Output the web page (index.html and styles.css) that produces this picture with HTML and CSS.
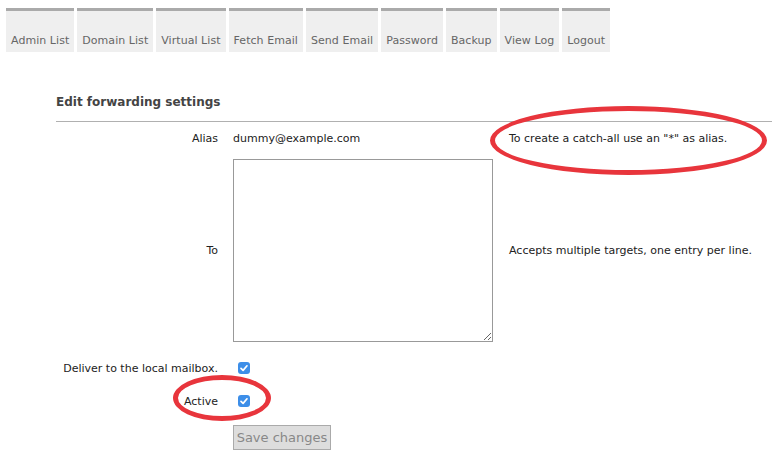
FILE: index.html
```html
<!DOCTYPE html>
<html>
<head>
<meta charset="utf-8">
<link rel="stylesheet" href="styles.css">
</head>
<body>
<nav class="tabs">
  <a class="tab" href="#">Admin List</a>
  <a class="tab" href="#">Domain List</a>
  <a class="tab" href="#">Virtual List</a>
  <a class="tab" href="#">Fetch Email</a>
  <a class="tab" href="#">Send Email</a>
  <a class="tab" href="#">Password</a>
  <a class="tab" href="#">Backup</a>
  <a class="tab" href="#">View Log</a>
  <a class="tab" href="#">Logout</a>
</nav>
<main class="content">
  <h3 class="title">Edit forwarding settings</h3>
  <form class="form">
    <div class="row row-alias">
      <span class="label">Alias</span>
      <span class="value">dummy@example.com</span>
      <span class="hint">To create a catch-all use an "*" as alias.</span>
    </div>
    <div class="row row-to">
      <span class="label">To</span>
      <textarea class="targets"></textarea>
      <span class="hint">Accepts multiple targets, one entry per line.</span>
    </div>
    <div class="row row-check row-deliver">
      <span class="label">Deliver to the local mailbox.</span>
      <span class="value"><span class="check"><svg viewBox="0 0 12 12" width="12" height="12"><path d="M3 6.3 L5.1 8.4 L9 3.8" fill="none" stroke="#fff" stroke-width="1.7" stroke-linecap="round" stroke-linejoin="round"/></svg></span></span>
    </div>
    <div class="row row-check">
      <span class="label">Active</span>
      <span class="value"><span class="check"><svg viewBox="0 0 12 12" width="12" height="12"><path d="M3 6.3 L5.1 8.4 L9 3.8" fill="none" stroke="#fff" stroke-width="1.7" stroke-linecap="round" stroke-linejoin="round"/></svg></span></span>
    </div>
    <div class="row row-submit">
      <span class="label"></span>
      <span class="value"><button type="button" class="save">Save changes</button></span>
    </div>
  </form>
</main>
<div class="mark mark-alias"></div>
<div class="mark mark-active"></div>
</body>
</html>
```
FILE: styles.css
```css
html, body {
  margin: 0;
  padding: 0;
  background: #fff;
}
body {
  position: relative;
  width: 778px;
  height: 467px;
  overflow: hidden;
  font-family: "DejaVu Sans", Verdana, sans-serif;
  font-size: 11px;
  color: #222;
}
.tabs {
  display: flex;
  gap: 3px;
  padding: 8px 0 0 6px;
}
.tab {
  display: block;
  background: #efefef;
  border-top: 3px solid #aaaaaa;
  padding: 23px 5px 4px;
  line-height: 14px;
  color: #666;
  text-decoration: none;
  white-space: nowrap;
  letter-spacing: 0.05px;
}
.content {
  margin: 0 6px 0 56px;
}
.title {
  margin: 0;
  padding-top: 43px;
  font-size: 12px;
  line-height: 14px;
  font-weight: bold;
  color: #444;
  padding-bottom: 12px;
  border-bottom: 1px solid #b0b0b0;
}
.row {
  display: grid;
  grid-template-columns: 162px 260px 1fr;
  column-gap: 15px;
  line-height: 14px;
}
.row > .hint {
  margin-left: 1px;
}
.label {
  text-align: right;
  white-space: nowrap;
}
.row-alias {
  margin-top: 10px;
}
.row-to {
  margin-top: 13px;
  align-items: center;
}
.targets {
  display: block;
  box-sizing: border-box;
  width: 260px;
  height: 183px;
  margin: 0;
  border: 1px solid #999;
  background: #fff;
  font-family: inherit;
}
.row-check {
  margin-top: 19px;
}
.row-deliver {
  margin-top: 20px;
}
.check {
  display: inline-block;
  width: 12px;
  height: 12px;
  margin-left: 5px;
  border-radius: 3px;
  background: #3d8ee8;
  vertical-align: -2px;
}
.check svg {
  display: block;
}
.row-submit {
  margin-top: 16px;
}
.save {
  box-sizing: border-box;
  width: 98px;
  height: 25px;
  padding: 0;
  margin: 0;
  background: #dddddd;
  border: 1px solid #aaaaaa;
  border-radius: 0;
  color: #888;
  font-family: inherit;
  font-size: 13px;
  white-space: nowrap;
}
.mark {
  position: absolute;
  box-sizing: border-box;
  border: 5px solid #e8353c;
  border-radius: 50%;
}
.mark-alias {
  left: 490px;
  top: 106px;
  width: 277px;
  height: 69px;
}
.mark-active {
  left: 173px;
  top: 375px;
  width: 98px;
  height: 46px;
}
```
